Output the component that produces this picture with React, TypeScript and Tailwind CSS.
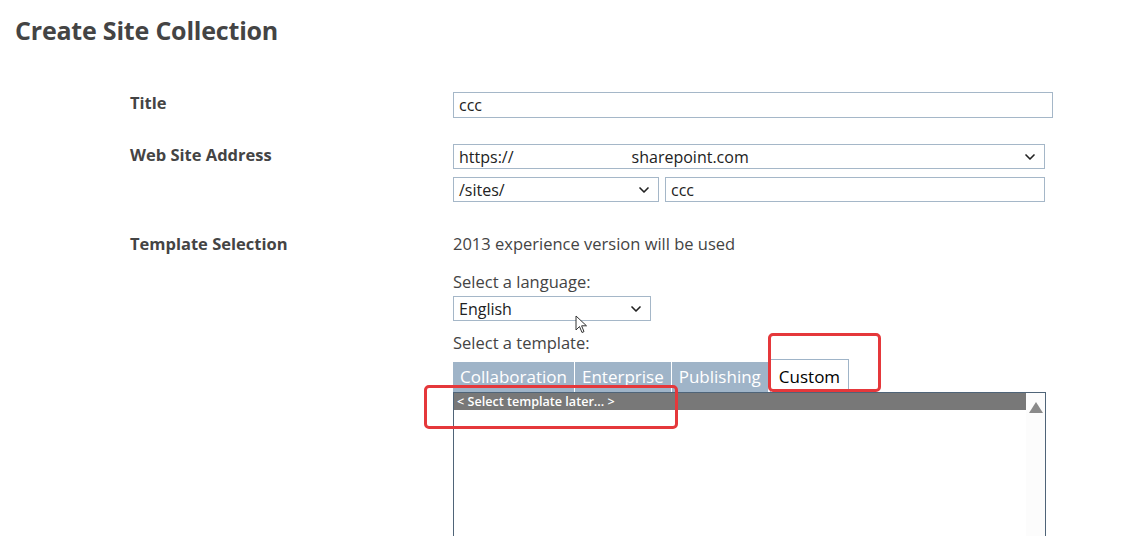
import { ChevronDown } from 'lucide-react'

const field = 'border border-[#a5b7c8] bg-white text-[16px] text-[#222]'

const Select = ({ value, className }: { value: React.ReactNode; className: string }) => (
  <div className={`flex items-center justify-between pl-[5px] pr-[6px] ${field} ${className}`}>
    <span>{value}</span>
    <ChevronDown size={16} strokeWidth={2.5} className="text-[#222]" />
  </div>
)

const tabs = ['Collaboration', 'Enterprise', 'Publishing']

export default function App() {
  return (
    <div className="relative h-[536px] overflow-hidden bg-white font-['Open_Sans','Noto_Sans',sans-serif] text-[#444]">
      <h1 className="pl-[15px] pt-[13px] text-[25px] font-bold leading-[34px] tracking-[-0.2px]">
        Create Site Collection
      </h1>

      <div className="mt-[45px] ml-[130px] grid grid-cols-[323px_600px] gap-y-[26px]">
        <div className="text-[16.5px] font-bold leading-[22px]">Title</div>
        <div className={`flex h-[26px] items-center pl-[5px] ${field}`}>ccc</div>

        <div className="text-[16.5px] font-bold leading-[22px]">Web Site Address</div>
        <div className="flex w-[592px] flex-col gap-[8px]">
          <Select
            className="h-[25px]"
            value={
              <>
                https://<span className="ml-[118px]">sharepoint.com</span>
              </>
            }
          />
          <div className="flex gap-[6px]">
            <Select className="h-[25px] w-[206px]" value="/sites/" />
            <div className={`flex h-[25px] flex-1 items-center pl-[5px] ${field}`}>ccc</div>
          </div>
        </div>

        <div className="pt-[5px] text-[16.5px] font-bold leading-[22px]">Template Selection</div>
        <div className="pt-[5px] text-[16.5px] leading-[22px]">
          <div>2013 experience version will be used</div>
          <div className="mt-[16px]">Select a language:</div>
          <Select className="mt-[3px] h-[25px] w-[198px]" value="English" />
          <div className="mt-[11px]">Select a template:</div>
          <div className="mt-[5px] flex h-[33px] items-end">
            {tabs.map((t) => (
              <div
                key={t}
                className="flex h-[30px] items-center border-r border-white bg-[#9fb4c8] px-[7px] text-[17px] text-white"
              >
                {t}
              </div>
            ))}
            <div className="ml-[1px] flex h-[33px] items-center border border-b-0 border-[#9fb4c8] bg-white px-[8px] pt-[2px] text-[17px] text-black">
              Custom
            </div>
          </div>
          <div className="flex h-[150px] w-[593px] border border-[#4f6478] bg-white">
            <div className="flex-1">
              <div className="h-[17px] bg-[#787878] pl-[3px] text-[12.6px] font-semibold leading-[17px] text-white">
                &lt; Select template later... &gt;
              </div>
            </div>
            <div className="flex w-[19px] justify-center bg-[#fcfcfc] pt-[9px]">
              <div className="h-0 w-0 border-x-[7px] border-b-[11px] border-x-transparent border-b-[#8a8a8a]" />
            </div>
          </div>
        </div>
      </div>

      <div className="absolute left-[424px] top-[385px] h-[44px] w-[254px] rounded-[5px] border-[3px] border-[#e5383b]" />
      <div className="absolute left-[768px] top-[333px] h-[59px] w-[113px] rounded-[5px] border-[3px] border-[#e5383b]" />

      <svg className="absolute left-[575px] top-[315px]" width="14" height="20" viewBox="0 0 14 20">
        <path d="M1 1 L1 15 L4.5 11.5 L7 17.5 L9 16.6 L6.6 10.8 L11.5 10.8 Z" fill="white" stroke="#333" strokeWidth="1" strokeLinejoin="round" />
      </svg>
    </div>
  )
}
